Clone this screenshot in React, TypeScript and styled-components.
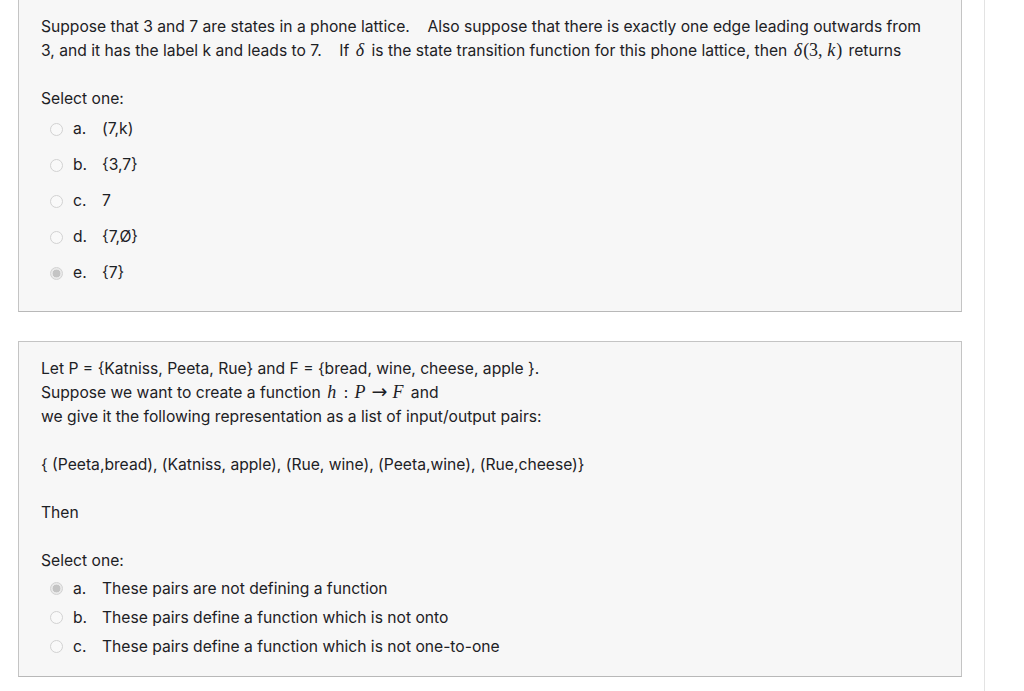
import React from "react";
import styled, { createGlobalStyle } from "styled-components";

const Global = createGlobalStyle`
  html, body { margin: 0; padding: 0; background: #ffffff; }
  body {
    font-family: Inter, "Noto Sans", "Liberation Sans", sans-serif;
    font-size: 15.65px;
    color: #1d2125;
    overflow: hidden;
  }
`;

const Layout = styled.div`
  display: flex;
  height: 691px;
  overflow: hidden;
`;

const Main = styled.main`
  width: 984px;
  flex: none;
  padding-left: 18px;
  box-sizing: border-box;
`;

const Drawer = styled.aside`
  flex: 1;
  border-left: 1px solid #e3e3e3;
`;

const Card = styled.section<{ $top: number; $padTop: number; $padBottom: number }>`
  width: 944px;
  box-sizing: border-box;
  margin-top: ${(p) => p.$top}px;
  background: #f7f7f7;
  border: 1px solid #c4c4c4;
  border-bottom-color: #b8b8b8;
  padding: ${(p) => p.$padTop}px 22px ${(p) => p.$padBottom}px 22px;
`;

const QText = styled.div`
  line-height: 24px;
  max-width: 890px;
`;

const Prompt = styled.div`
  line-height: 24px;
`;

const Math = styled.span`
  font-family: "Liberation Serif", "DejaVu Serif", serif;
  font-size: 18px;
  line-height: 1;
  margin: 0 2px;
`;

const MI = styled.i`
  font-family: "Liberation Serif", "DejaVu Serif", serif;
  font-style: italic;
  padding-right: 1px;
`;

const MO = styled.span<{ $space: number; $size: number }>`
  font-family: "DejaVu Sans", sans-serif;
  font-size: ${(p) => p.$size}px;
  margin: 0 ${(p) => p.$space}px;
`;

const Answers = styled.div<{ $offset: number }>`
  display: flex;
  flex-direction: column;
  padding-left: 9px;
  margin-top: ${(p) => p.$offset}px;
`;

const Row = styled.label<{ $h: number }>`
  display: flex;
  align-items: center;
  height: ${(p) => p.$h}px;
  line-height: 22px;
`;

const Radio = styled.span<{ $checked?: boolean }>`
  flex: none;
  width: 13px;
  height: 13px;
  box-sizing: border-box;
  border-radius: 50%;
  border: 1px solid #d2d2d2;
  background: ${(p) =>
    p.$checked
      ? "radial-gradient(circle, #c4c4c4 0 3.6px, #e9e9e9 4.2px)"
      : "#f9f9f9"};
  margin-right: 10px;
`;

const Letter = styled.span`
  width: 29px;
  flex: none;
`;

type Opt = { l: string; t: React.ReactNode; c?: boolean };

const Options = ({ opts, h, offset }: { opts: Opt[]; h: number; offset: number }) => (
  <Answers $offset={offset}>
    {opts.map((o) => (
      <Row key={o.l} $h={h}>
        <Radio $checked={o.c} />
        <Letter>{o.l}.</Letter>
        <span>{o.t}</span>
      </Row>
    ))}
  </Answers>
);

export default function App() {
  return (
    <>
      <Global />
      <Layout>
        <Main>
          <Card $top={-10} $padTop={24} $padBottom={20}>
            <QText>
              Suppose that 3 and 7 are states in a phone lattice.&nbsp;&nbsp;&nbsp; Also suppose that there is
              exactly one edge leading outwards from
              <br />
              3, and it has the label k and leads to 7.&nbsp;&nbsp;&nbsp; If{" "}
              <Math><MI>δ</MI></Math> is the state transition function for this phone lattice, then{" "}
              <Math>
                <MI>δ</MI>(3, <MI>k</MI>)
              </Math>{" "}
              returns
              <br />
              <br />
            </QText>
            <Prompt>Select one:</Prompt>
            <Options
              h={36}
              offset={0}
              opts={[
                { l: "a", t: "(7,k)" },
                { l: "b", t: "{3,7}" },
                { l: "c", t: "7" },
                { l: "d", t: "{7,Ø}" },
                { l: "e", t: "{7}", c: true },
              ]}
            />
          </Card>
          <Card $top={29} $padTop={15} $padBottom={15}>
            <QText>
              Let P = {"{"}Katniss, Peeta, Rue{"}"} and F = {"{"}bread, wine, cheese, apple {"}"}.
              <br />
              Suppose we want to create a function{" "}
              <Math>
                <MI>h</MI>
                <MO $space={6} $size={16}>:</MO>
                <MI>P</MI>
                <MO $space={5} $size={19}>→</MO>
                <MI>F</MI>
              </Math>{" "}
              and
              <br />
              we give it the following representation as a list of input/output pairs:
              <br />
              <br />
              {"{"} (Peeta,bread), (Katniss, apple), (Rue, wine), (Peeta,wine), (Rue,cheese){"}"}
              <br />
              <br />
              Then
              <br />
              <br />
            </QText>
            <Prompt>Select one:</Prompt>
            <Options
              h={29}
              offset={1}
              opts={[
                { l: "a", t: "These pairs are not defining a function", c: true },
                { l: "b", t: "These pairs define a function which is not onto" },
                { l: "c", t: "These pairs define a function which is not one-to-one" },
              ]}
            />
          </Card>
        </Main>
        <Drawer />
      </Layout>
    </>
  );
}
